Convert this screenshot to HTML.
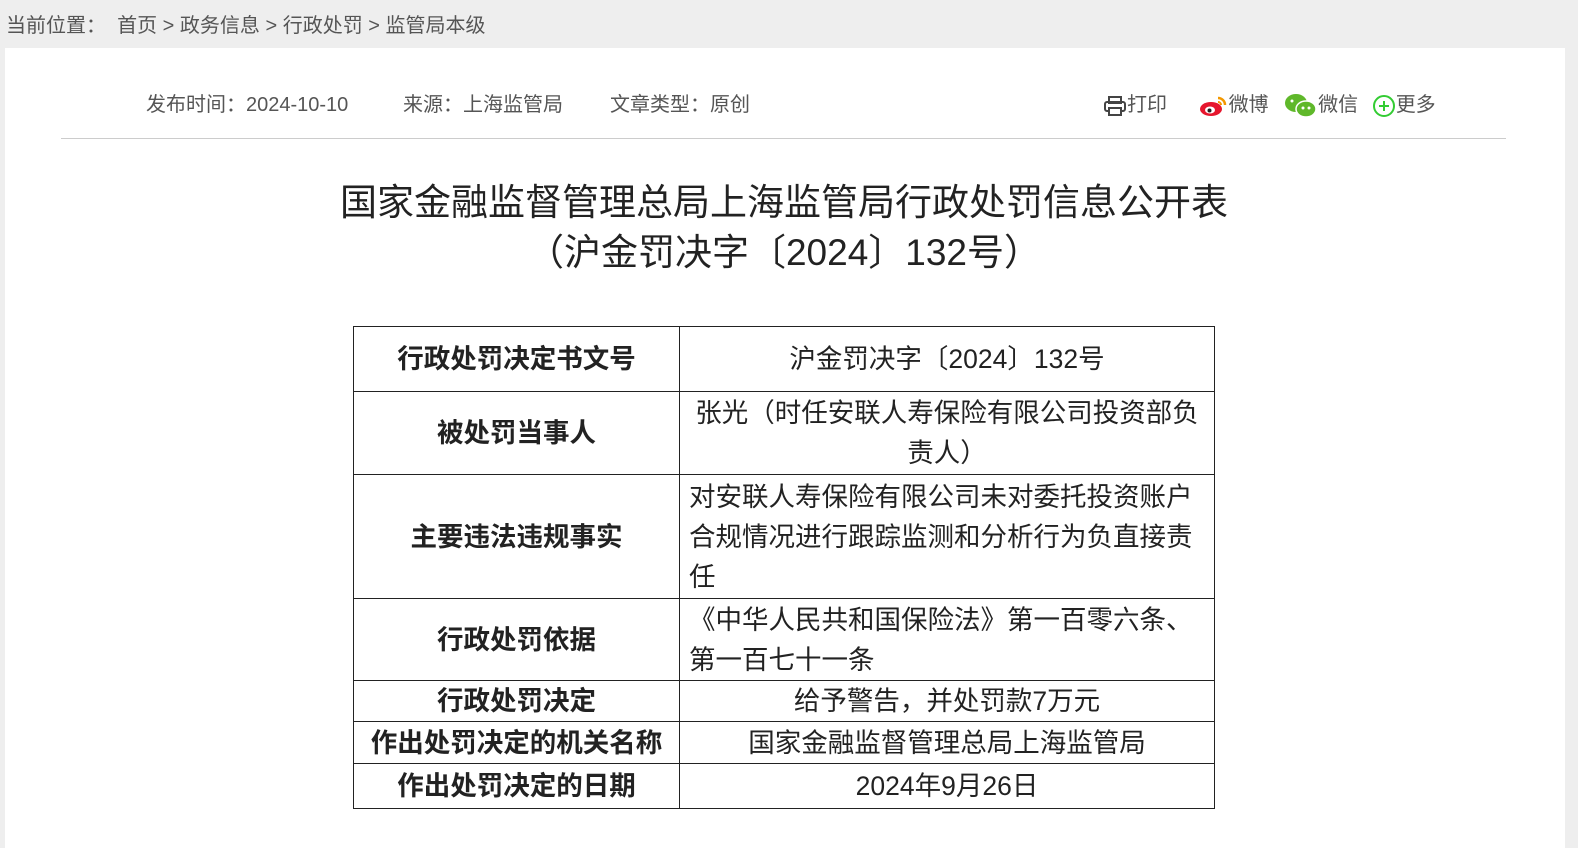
<!DOCTYPE html>
<html><head><meta charset="utf-8"><style>
body{margin:0;background:#eeeeee;font-family:"Liberation Sans","Noto Sans CJK SC",sans-serif;width:1578px;height:822px;overflow:hidden;position:relative}
.crumb{position:absolute;left:6px;top:9px;font-size:20px;color:#555;white-space:pre}
.panel{position:absolute;left:5px;top:48px;width:1560px;height:800px;background:#fff}
.meta{position:absolute;top:88px;font-size:20px;color:#555;white-space:nowrap}
.hr{position:absolute;left:61px;top:138px;width:1445px;height:1px;background:#ccc}
.title{position:absolute;left:0;width:1568px;text-align:center;font-size:37px;color:#222;line-height:50px}
table{position:absolute;left:353px;top:326px;border-collapse:collapse;table-layout:fixed;width:861px;font-size:26.5px;color:#222}
td{border:1px solid #222;padding:0 9px;line-height:40px}
td.h{text-align:center;font-weight:bold}
.ic{display:inline-block;vertical-align:middle}
</style></head><body>
<div class="crumb">当前位置：  首页 &gt; 政务信息 &gt; 行政处罚 &gt; 监管局本级</div>
<div class="panel"></div>
<div class="meta" style="left:146px">发布时间：2024-10-10</div>
<div class="meta" style="left:403px">来源：上海监管局</div>
<div class="meta" style="left:610px">文章类型：原创</div>
<div class="meta" style="left:1103px">
<svg class="ic" width="24" height="22" viewBox="0 0 24 22"><rect x="6" y="2" width="12" height="6" fill="none" stroke="#444" stroke-width="2"/><rect x="2" y="7" width="20" height="9" rx="2" fill="none" stroke="#444" stroke-width="2"/><rect x="6" y="13" width="12" height="7" fill="#fff" stroke="#444" stroke-width="2"/></svg>打印
<span style="margin-left:26px"><svg class="ic" width="30" height="24" viewBox="0 0 30 24"><ellipse cx="12" cy="15" rx="11" ry="7" fill="#e6162d"/><ellipse cx="11" cy="16" rx="5" ry="3.5" fill="#fff"/><circle cx="10.5" cy="16.5" r="2" fill="#222"/><path d="M19 4a7 7 0 0 1 7 7" stroke="#f39800" stroke-width="2.5" fill="none"/><path d="M19 8a3 3 0 0 1 3 3" stroke="#f39800" stroke-width="2" fill="none"/></svg>微博</span>
<span style="margin-left:10px"><svg class="ic" width="34" height="26" viewBox="0 0 34 26"><ellipse cx="12" cy="10" rx="11" ry="9" fill="#5fb82a"/><ellipse cx="22" cy="16" rx="10" ry="8" fill="#5fb82a" stroke="#fff" stroke-width="1.5"/><circle cx="19" cy="15" r="1.5" fill="#fff"/><circle cx="25" cy="15" r="1.5" fill="#fff"/><circle cx="8" cy="8" r="1.5" fill="#fff"/></svg>微信</span>
<span style="margin-left:8px"><svg class="ic" width="24" height="24" viewBox="0 0 24 24"><circle cx="12" cy="12" r="10" fill="none" stroke="#3c3" stroke-width="2"/><path d="M12 7v10M7 12h10" stroke="#3c3" stroke-width="2"/></svg>更多</span>
</div>
<div class="hr"></div>
<div class="title" style="top:178px">国家金融监督管理总局上海监管局行政处罚信息公开表</div>
<div class="title" style="top:228px">（沪金罚决字〔2024〕132号）</div>
<table>
<colgroup><col style="width:326px"><col style="width:535px"></colgroup>
<tr style="height:65px"><td class="h">行政处罚决定书文号</td><td style="text-align:center">沪金罚决字〔2024〕132号</td></tr>
<tr style="height:83px"><td class="h">被处罚当事人</td><td style="text-align:center">张光（时任安联人寿保险有限公司投资部负<br>责人）</td></tr>
<tr style="height:124px"><td class="h">主要违法违规事实</td><td>对安联人寿保险有限公司未对委托投资账户<br>合规情况进行跟踪监测和分析行为负直接责<br>任</td></tr>
<tr style="height:82px"><td class="h">行政处罚依据</td><td>《中华人民共和国保险法》第一百零六条、<br>第一百七十一条</td></tr>
<tr style="height:41px"><td class="h">行政处罚决定</td><td style="text-align:center">给予警告，并处罚款7万元</td></tr>
<tr style="height:42px"><td class="h">作出处罚决定的机关名称</td><td style="text-align:center">国家金融监督管理总局上海监管局</td></tr>
<tr style="height:45px"><td class="h">作出处罚决定的日期</td><td style="text-align:center">2024年9月26日</td></tr>
</table>
</body></html>
